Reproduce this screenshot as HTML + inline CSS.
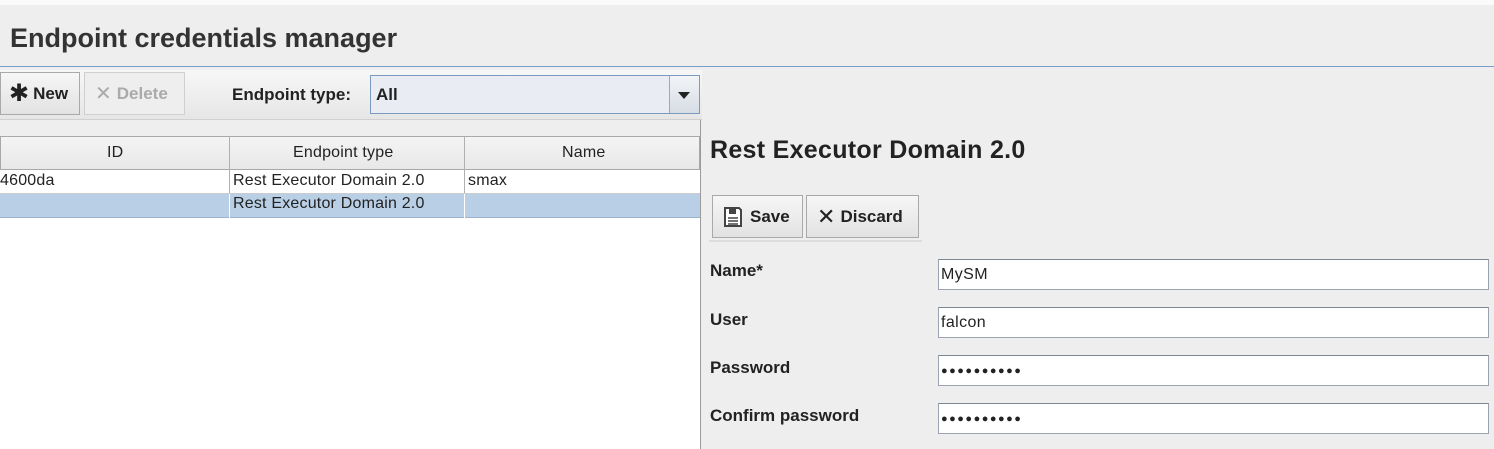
<!DOCTYPE html>
<html><head><style>
*{box-sizing:border-box;margin:0;padding:0}
body{width:1494px;height:449px;background:#eeeeee;font-family:"Liberation Sans",Arial,sans-serif;position:relative;overflow:hidden;color:#222}
.a{position:absolute}
.btn{position:absolute;border:1px solid #a9a9a9;background:linear-gradient(#f6f6f6,#e2e2e2);font-weight:bold;font-size:17px;display:flex;align-items:center;letter-spacing:0}
.cell{position:absolute;font-size:16px;letter-spacing:0.2px;white-space:nowrap}
.lbl{position:absolute;left:710px;font-weight:bold;font-size:17px;letter-spacing:0}
.fld{position:absolute;left:938px;width:551px;height:31px;background:#fff;border:1px solid #9aa3ad;border-top-color:#7d8794;font-size:16px;padding:6px 0 0 2px;letter-spacing:0.4px}
.pw{font-size:11px;font-weight:bold;letter-spacing:1.5px;padding-top:9px}
</style></head><body>
<div class="a" style="left:0;top:0;width:1494px;height:5px;background:#fafafa"></div>
<div class="a" style="left:10px;top:23px;font-size:27px;font-weight:bold;letter-spacing:0;color:#333">Endpoint credentials manager</div>
<div class="a" style="left:0;top:66px;width:1494px;height:1px;background:#7a9cc8"></div>
<div class="a" style="left:0;top:70px;width:702px;height:50px;background:linear-gradient(#f7f7f7,#e6e6e6);border-bottom:1px solid #d0d0d0"></div>
<div class="btn" style="left:0;top:72px;width:80px;height:43px;padding-left:8px"><span style="font-size:24px;margin-right:4px;font-weight:normal">✱</span>New</div>
<div class="btn" style="left:84px;top:72px;width:101px;height:43px;padding-left:10px;color:#aaa;border-color:#cfcfcf;background:#eee"><span style="font-size:20px;margin-right:5px;font-weight:normal">✕</span>Delete</div>
<div class="a" style="left:232px;top:85px;font-weight:bold;font-size:17px">Endpoint type:</div>
<div class="a" style="left:370px;top:75px;width:330px;height:39px;background:#e9edf3;border:1px solid #7b9ac0"></div>
<div class="a" style="left:376px;top:85px;font-weight:bold;font-size:17px">All</div>
<div class="a" style="left:669px;top:76px;width:30px;height:37px;background:linear-gradient(#f2f4f7,#d7dde5);border-left:1px solid #9ab"></div>
<div class="a" style="left:678px;top:92px;width:0;height:0;border-left:6px solid transparent;border-right:6px solid transparent;border-top:7px solid #222"></div>
<div class="a" style="left:0;top:136px;width:700px;height:313px;background:#fff"></div>
<div class="a" style="left:0;top:136px;width:700px;height:34px;background:linear-gradient(#f4f4f4,#e8e8e8);border:1px solid #a8a8a8"></div>
<div class="a" style="left:229px;top:136px;width:1px;height:82px;background:#b0b0b0"></div>
<div class="a" style="left:464px;top:136px;width:1px;height:82px;background:#b0b0b0"></div>
<div class="cell" style="left:107px;top:144px">ID</div>
<div class="cell" style="left:293px;top:144px">Endpoint type</div>
<div class="cell" style="left:562px;top:144px">Name</div>
<div class="cell" style="left:0;top:172px">4600da</div>
<div class="cell" style="left:233px;top:172px">Rest Executor Domain 2.0</div>
<div class="cell" style="left:468px;top:172px">smax</div>
<div class="a" style="left:0;top:193px;width:700px;height:1px;background:#ccc"></div>
<div class="a" style="left:0;top:194px;width:700px;height:24px;background:#b8cfe5;border-bottom:1px solid #9bb2cc"></div>
<div class="a" style="left:229px;top:194px;width:1px;height:24px;background:#fff"></div>
<div class="a" style="left:464px;top:194px;width:1px;height:24px;background:#fff"></div>
<div class="cell" style="left:233px;top:195px">Rest Executor Domain 2.0</div>
<div class="a" style="left:700px;top:120px;width:1px;height:329px;background:#9a9a9a"></div>
<div class="a" style="left:710px;top:136px;font-size:25px;font-weight:bold;letter-spacing:0.3px;color:#222">Rest Executor Domain 2.0</div>
<div class="a" style="left:709px;top:192px;width:213px;height:50px;border-bottom:2px solid #ddd"></div>
<div class="btn" style="left:712px;top:195px;width:91px;height:43px;padding-left:10px"><svg width="20" height="22" viewBox="0 0 20 22" style="margin-right:7px"><path d="M2 2h14l2 2v16H2z" fill="#fff" stroke="#444" stroke-width="2"/><rect x="6" y="3" width="7" height="5" fill="#444"/><path d="M5 12h10M5 15h10M5 18h10" stroke="#444" stroke-width="1.5"/></svg>Save</div>
<div class="btn" style="left:806px;top:195px;width:113px;height:43px;padding-left:10px"><span style="font-size:22px;margin-right:5px;font-weight:normal">✕</span>Discard</div>
<div class="lbl" style="top:261px">Name*</div>
<div class="lbl" style="top:310px">User</div>
<div class="lbl" style="top:358px">Password</div>
<div class="lbl" style="top:406px">Confirm password</div>
<div class="fld" style="top:259px">MySM</div>
<div class="fld" style="top:307px">falcon</div>
<div class="fld pw" style="top:355px">●●●●●●●●●●</div>
<div class="fld pw" style="top:403px">●●●●●●●●●●</div>
</body></html>
